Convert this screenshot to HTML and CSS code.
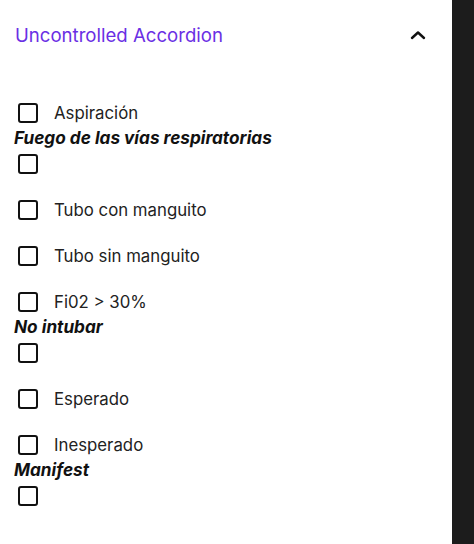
FILE: index.html
```html
<!DOCTYPE html>
<html lang="es">
<head>
    <meta charset="UTF-8">
    <meta name="viewport" content="width=device-width, initial-scale=1.0">
    <title>Uncontrolled Accordion</title>
    <link rel="stylesheet" href="styles.css">
</head>
<body>
    <div class="screen">
        <div class="accordion">
            <div class="accordion-header">
                <span class="accordion-title">Uncontrolled Accordion</span>
                <svg class="chevron" width="16" height="10" viewBox="0 0 16 10">
                    <path d="M2 8 L8 2.5 L14 8" fill="none" stroke="#111" stroke-width="2.4" stroke-linecap="round" stroke-linejoin="round"/>
                </svg>
            </div>
            <div class="accordion-body">
                <div class="group">
                    <div class="options">
                        <label class="option"><span class="box"></span><span class="label">Aspiración</span></label>
                    </div>
                </div>
                <div class="group">
                    <div class="heading">Fuego de las vías respiratorias</div>
                    <div class="options">
                        <label class="option"><span class="box"></span></label>
                        <label class="option"><span class="box"></span><span class="label">Tubo con manguito</span></label>
                        <label class="option"><span class="box"></span><span class="label">Tubo sin manguito</span></label>
                        <label class="option"><span class="box"></span><span class="label">Fi02 &gt; 30%</span></label>
                    </div>
                </div>
                <div class="group">
                    <div class="heading">No intubar</div>
                    <div class="options">
                        <label class="option"><span class="box"></span></label>
                        <label class="option"><span class="box"></span><span class="label">Esperado</span></label>
                        <label class="option"><span class="box"></span><span class="label">Inesperado</span></label>
                    </div>
                </div>
                <div class="group">
                    <div class="heading">Manifest</div>
                    <div class="options">
                        <label class="option"><span class="box"></span></label>
                    </div>
                </div>
            </div>
        </div>
        <div class="sidebar"></div>
    </div>
</body>
</html>
```

FILE: styles.css
```css
body {
    margin: 0;
    font-family: Inter, "Noto Sans", sans-serif;
    background-color: #fff;
}

.screen {
    display: flex;
    height: 544px;
}

.accordion {
    flex: 1;
    background-color: #fff;
}

.sidebar {
    width: 22px;
    background-color: #1c1c1c;
}

.accordion-header {
    display: flex;
    align-items: center;
    justify-content: space-between;
    height: 69px;
    padding: 0 26px 0 15px;
}

.accordion-title {
    font-size: 18.6px;
    color: #6a2fe4;
}

.chevron {
    display: block;
}

.accordion-body {
    padding: 33px 0 0 14px;
}

.heading {
    font-size: 17.2px;
    font-weight: 700;
    font-style: italic;
    line-height: 30px;
    color: #111;
}

.options {
    display: flex;
    flex-direction: column;
    gap: 25px;
}

.option {
    display: flex;
    align-items: center;
    height: 21px;
    cursor: pointer;
}

.box {
    width: 16px;
    height: 16px;
    margin-left: 4px;
    border: 2.5px solid #111;
    border-radius: 3px;
}

.label {
    margin-left: 16px;
    font-size: 16.8px;
    color: #222;
}
```
